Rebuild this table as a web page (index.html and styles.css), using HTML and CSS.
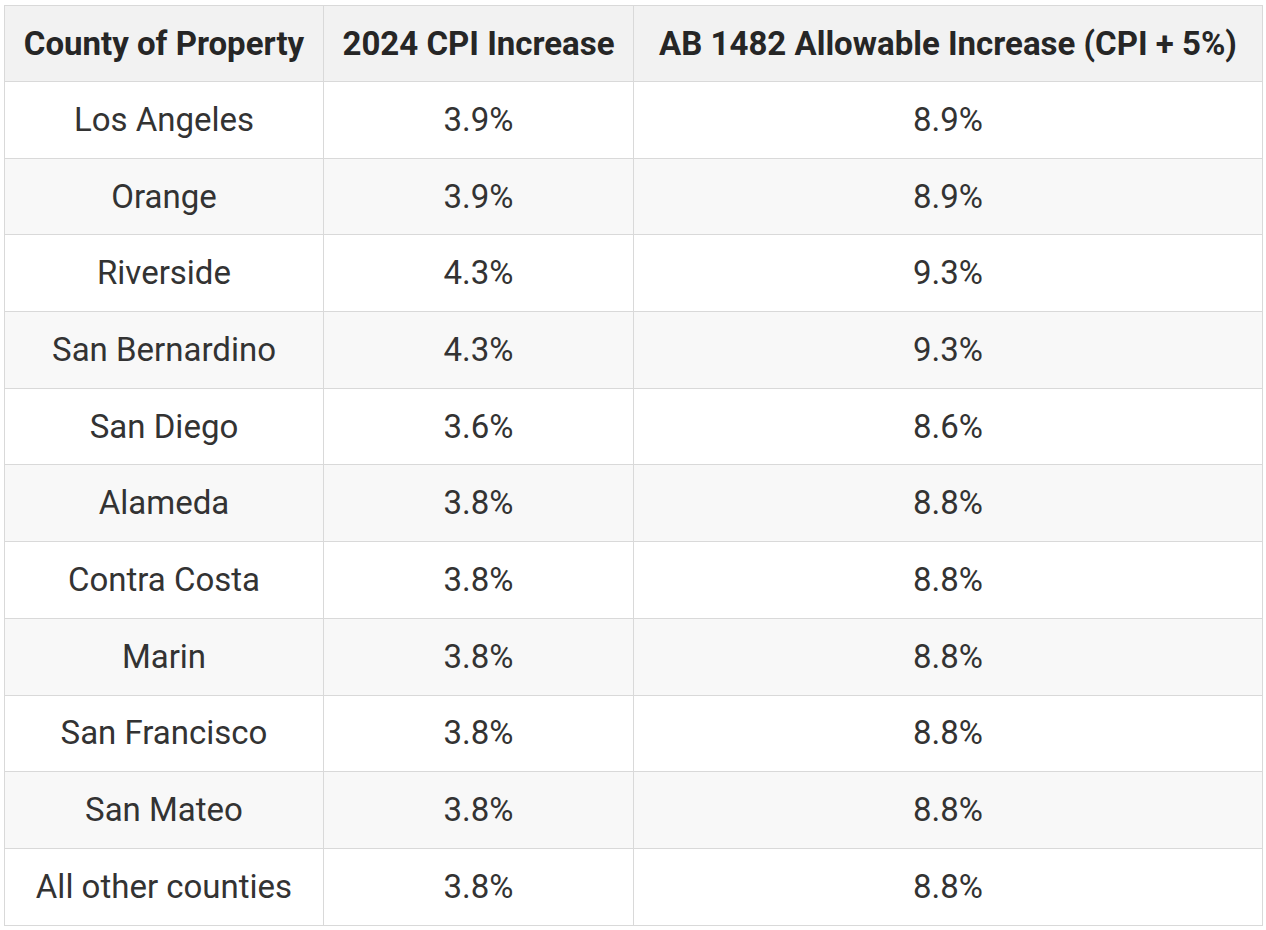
FILE: index.html
```html
<!DOCTYPE html>
<html lang="en">
<head>
<meta charset="utf-8">
<title>AB 1482 Allowable Increase</title>
<link rel="stylesheet" href="styles.css">
</head>
<body>
<table class="cpi-table">
  <colgroup>
    <col class="col-county">
    <col class="col-cpi">
    <col class="col-allow">
  </colgroup>
  <thead>
    <tr>
      <th>County of Property</th>
      <th>2024 CPI Increase</th>
      <th>AB 1482 Allowable Increase (CPI + 5%)</th>
    </tr>
  </thead>
  <tbody>
    <tr><td>Los Angeles</td><td>3.9%</td><td>8.9%</td></tr>
    <tr><td>Orange</td><td>3.9%</td><td>8.9%</td></tr>
    <tr><td>Riverside</td><td>4.3%</td><td>9.3%</td></tr>
    <tr><td>San Bernardino</td><td>4.3%</td><td>9.3%</td></tr>
    <tr><td>San Diego</td><td>3.6%</td><td>8.6%</td></tr>
    <tr><td>Alameda</td><td>3.8%</td><td>8.8%</td></tr>
    <tr><td>Contra Costa</td><td>3.8%</td><td>8.8%</td></tr>
    <tr><td>Marin</td><td>3.8%</td><td>8.8%</td></tr>
    <tr><td>San Francisco</td><td>3.8%</td><td>8.8%</td></tr>
    <tr><td>San Mateo</td><td>3.8%</td><td>8.8%</td></tr>
    <tr><td>All other counties</td><td>3.8%</td><td>8.8%</td></tr>
  </tbody>
</table>
</body>
</html>
```
FILE: styles.css
```css
html, body {
  margin: 0;
  background: #ffffff;
}
body {
  padding: 5px 4px 0 4px;
  font-family: Roboto, "Liberation Sans", Arial, sans-serif;
}
.cpi-table {
  border-collapse: collapse;
  table-layout: fixed;
  width: 1258px;
  color: #333333;
  font-size: 33px;
}
.col-county { width: 319px; }
.col-cpi { width: 310px; }
.col-allow { width: 629px; }
.cpi-table th,
.cpi-table td {
  border: 1px solid #d9d9d9;
  text-align: center;
  padding: 0 2px;
  white-space: nowrap;
  line-height: 38px;
}
.cpi-table th {
  height: 75px;
  background: #f2f2f2;
  color: #262626;
  font-weight: 700;
}
.cpi-table td {
  height: 75.7px;
  font-weight: 400;
}
.cpi-table tbody tr:nth-child(even) td {
  background: #f8f8f8;
}
```
